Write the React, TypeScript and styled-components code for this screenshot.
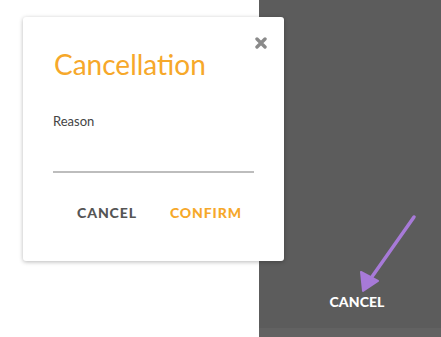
import React from 'react'
import styled, { createGlobalStyle } from 'styled-components'

const Global = createGlobalStyle`
    html, body {
        margin: 0;
        padding: 0;
        background: #fff;
    }
    body {
        font-family: Lato, "Liberation Sans", sans-serif;
    }
`

const App = () => {
    return (
        <Page>
            <Global />
            <Backdrop />
            <Side>
                <SideMain>
                    <Arrow width="70" height="90" viewBox="0 0 70 90">
                        <line x1="65" y1="4" x2="20" y2="68" stroke="#a77ad8" strokeWidth="3.5" strokeLinecap="round" />
                        <polygon points="14,78 12,59 29,68" fill="#a77ad8" stroke="#a77ad8" strokeWidth="2" strokeLinejoin="round" />
                    </Arrow>
                    <SideButton>CANCEL</SideButton>
                </SideMain>
                <SideFooter />
            </Side>

            <Dialog>
                <Close aria-label="close">
                    <svg width="12" height="12" viewBox="0 0 12 12">
                        <path d="M2 2 L10 10 M10 2 L2 10" stroke="#8a8a8a" strokeWidth="3.4" strokeLinecap="round" />
                    </svg>
                </Close>
                <Title>Cancellation</Title>
                <Label>Reason</Label>
                <Field />
                <Actions>
                    <ActionButton>CANCEL</ActionButton>
                    <ActionButton primary>CONFIRM</ActionButton>
                </Actions>
            </Dialog>
        </Page>
    )
}

export default App

const Page = styled.div`
    position: relative;
    display: flex;
    width: 441px;
    height: 337px;
    overflow: hidden;
`
const Backdrop = styled.div`
    width: 259px;
    flex-shrink: 0;
    background: #fff;
`
const Side = styled.div`
    flex: 1;
    display: flex;
    flex-direction: column;
`
const SideMain = styled.div`
    position: relative;
    flex: 1;
    background: #5c5c5c;
    display: flex;
    align-items: flex-end;
    justify-content: center;
    padding: 0 0 18px 14px;
`
const SideFooter = styled.div`
    height: 9px;
    background: #626262;
`
const SideButton = styled.div`
    color: #fff;
    font-weight: 900;
    font-size: 14px;
    letter-spacing: 0.1px;
`
const Arrow = styled.svg`
    position: absolute;
    left: 90px;
    top: 213px;
`
const Dialog = styled.div`
    position: absolute;
    left: 23px;
    top: 17px;
    width: 261px;
    height: 244px;
    box-sizing: border-box;
    background: #fff;
    border-radius: 3px;
    box-shadow: 0 1px 4px rgba(0, 0, 0, 0.28);
    padding: 30px 30px 0 30px;
    display: flex;
    flex-direction: column;
`
const Close = styled.button`
    position: absolute;
    top: 20px;
    right: 17px;
    border: 0;
    padding: 0;
    background: none;
    display: flex;
`
const Title = styled.h1`
    margin: 0 0 0 1px;
    font-size: 28px;
    line-height: 34px;
    font-weight: 400;
    color: #f6a82a;
`
const Label = styled.div`
    margin-top: 32px;
    font-size: 13px;
    color: #444;
`
const Field = styled.div`
    margin-top: 42px;
    height: 0;
    border-bottom: 2px solid #bdbdbd;
`
const Actions = styled.div`
    display: flex;
    justify-content: center;
    gap: 33px;
    margin-top: 31px;
    padding-left: 12px;
`
const ActionButton = styled.button<{ primary?: boolean }>`
    border: 0;
    background: none;
    padding: 0;
    font-family: Lato, "Liberation Sans", sans-serif;
    font-size: 14px;
    font-weight: 900;
    letter-spacing: 0.9px;
    color: ${p => (p.primary ? '#f6a82a' : '#555')};
`
